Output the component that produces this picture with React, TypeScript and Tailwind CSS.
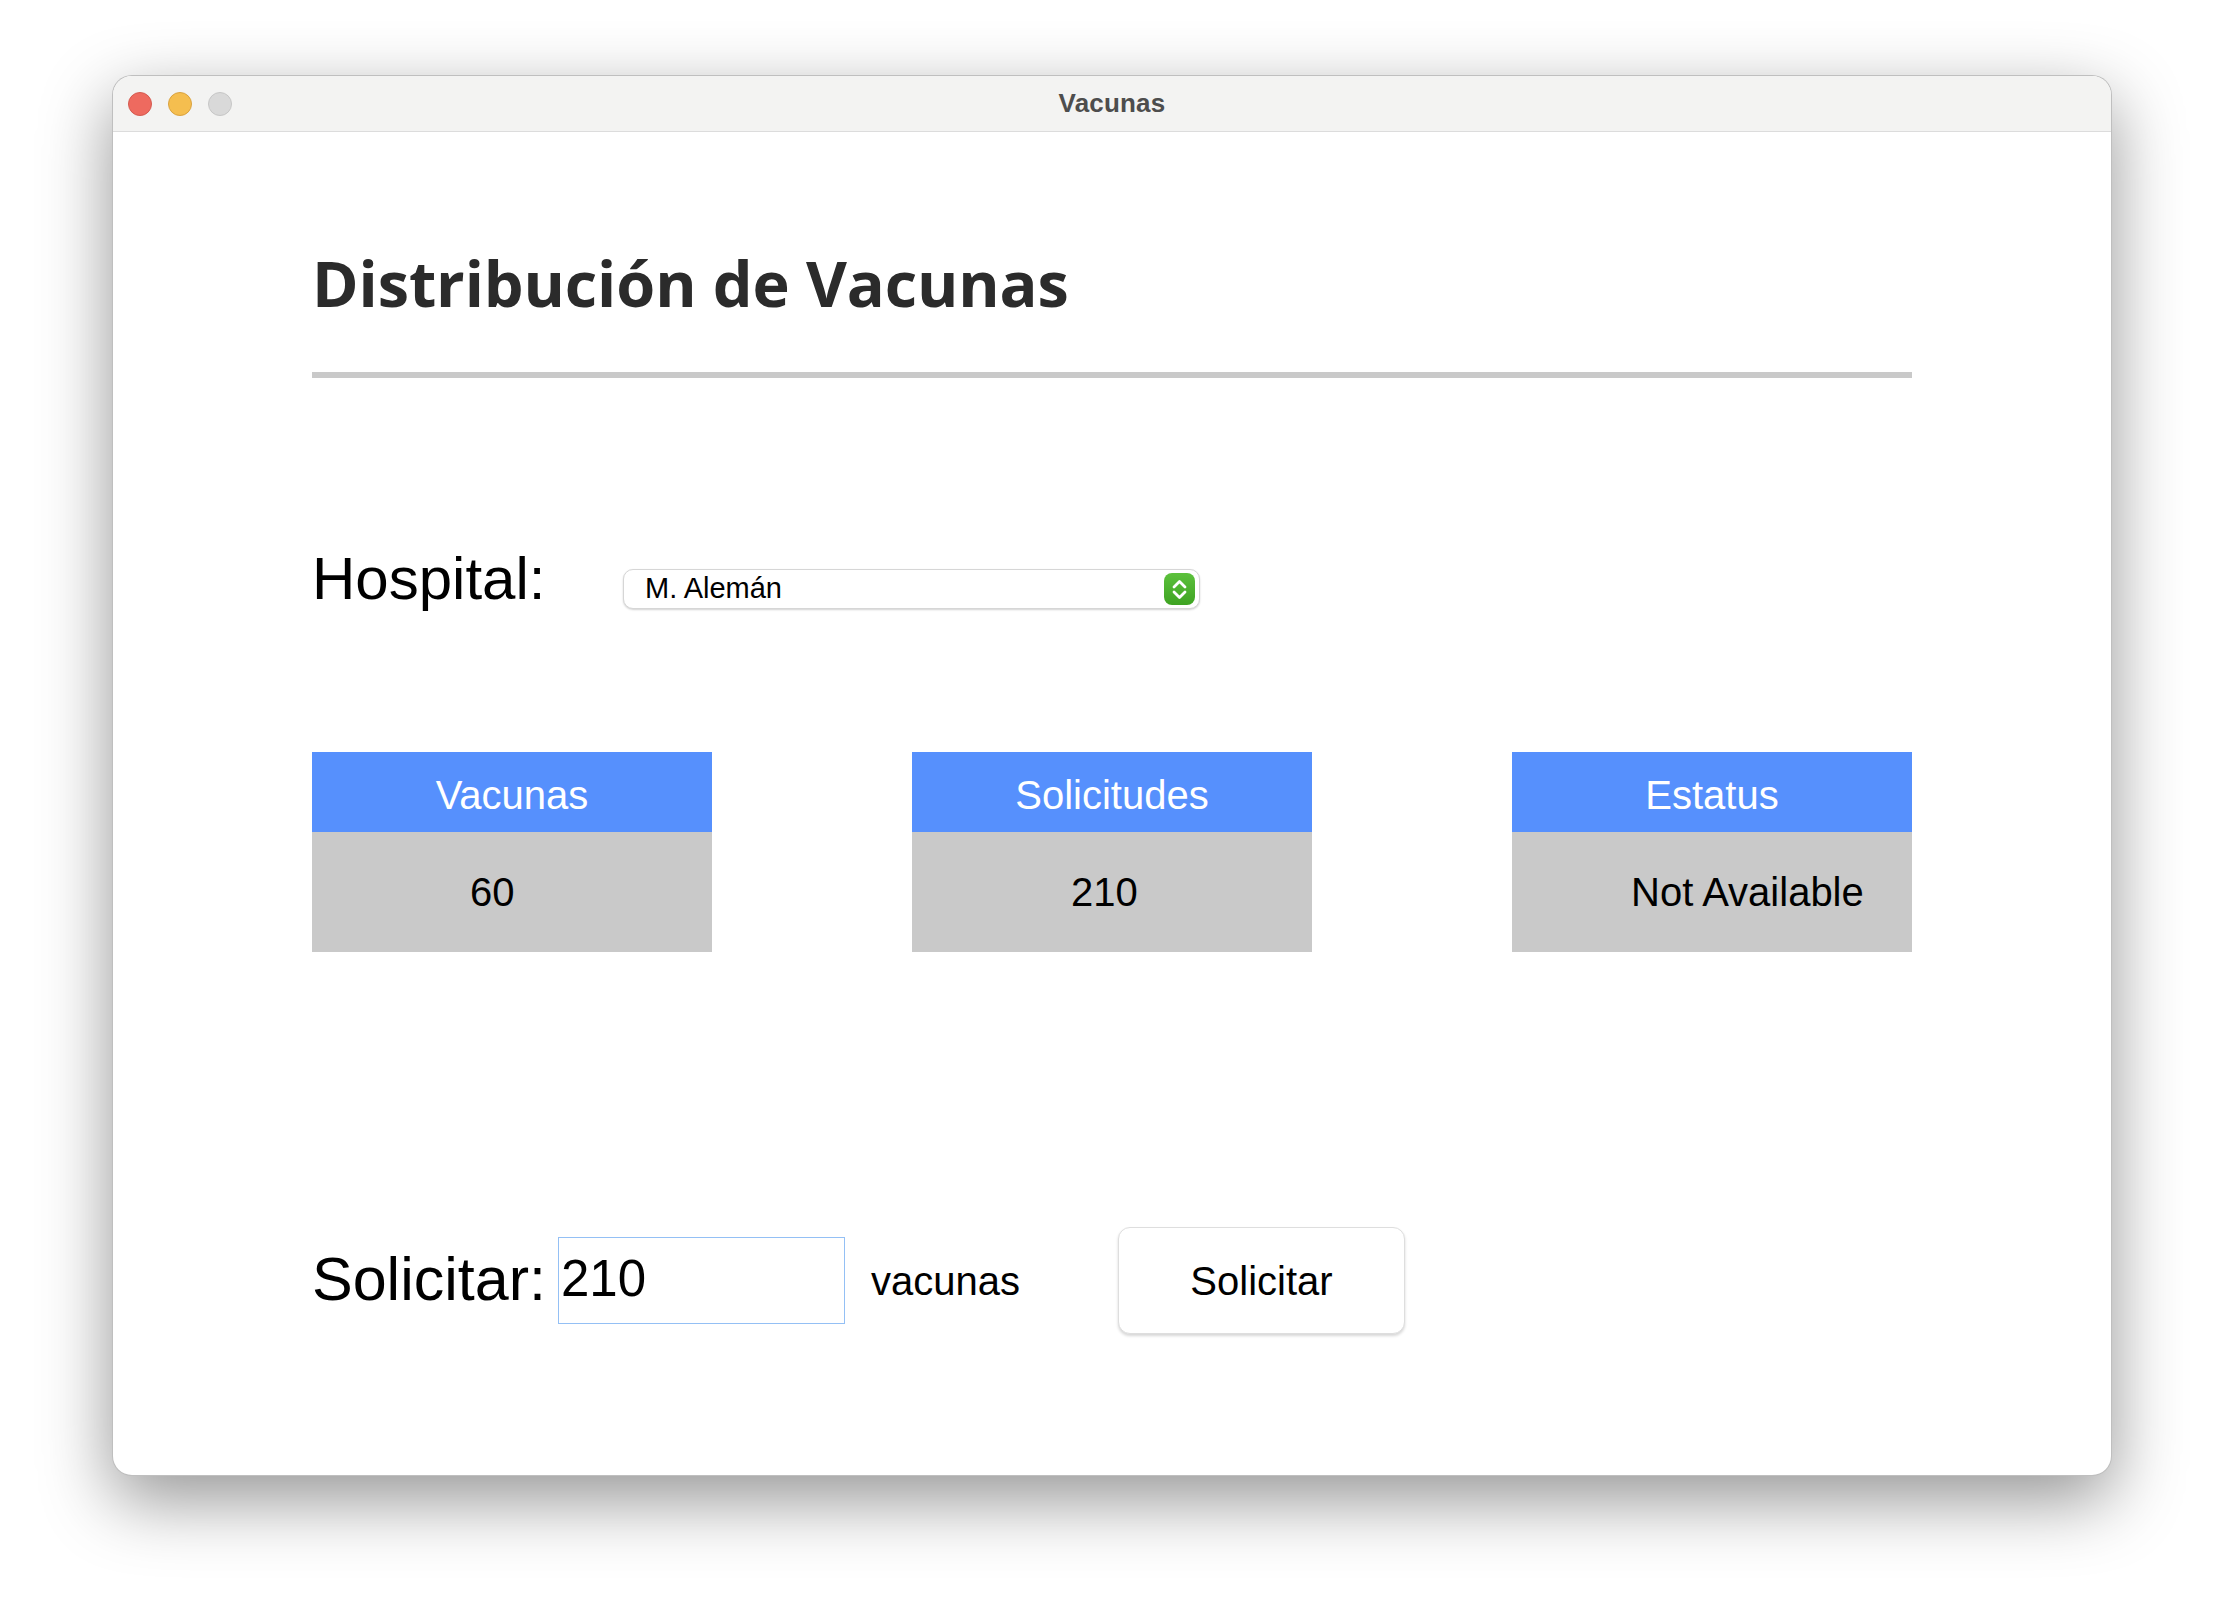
import React from "react";

interface Stat {
  title: string;
  value: string;
  pad: string;
}

const stats: Stat[] = [
  { title: "Vacunas", value: "60", pad: "pl-[158px]" },
  { title: "Solicitudes", value: "210", pad: "pl-[159px]" },
  { title: "Estatus", value: "Not Available", pad: "pl-[119px]" },
];

function Stepper() {
  return (
    <div className="w-[31px] h-[32px] rounded-[8px] bg-gradient-to-b from-[#5cc13c] to-[#3ea322] flex items-center justify-center">
      <svg width="31" height="32" viewBox="0 0 31 32" fill="none">
        <path d="M10 14 L15.5 8.5 L21 14" stroke="white" strokeWidth="2.8" strokeLinecap="round" strokeLinejoin="round" />
        <path d="M10 19 L15.5 24.5 L21 19" stroke="white" strokeWidth="2.8" strokeLinecap="round" strokeLinejoin="round" />
      </svg>
    </div>
  );
}

export default function App() {
  const sans = "font-['Liberation_Sans',Arial,sans-serif]";

  return (
    <div className="min-h-[1624px] w-full bg-white flex justify-center items-start pt-[75px]">
      <div className="w-[2000px] h-[1401px] rounded-[20px] bg-white border border-black/25 shadow-[0_24px_70px_rgba(0,0,0,0.42)] overflow-hidden flex flex-col">
        {/* Title bar */}
        <div className="h-[56px] shrink-0 bg-[#f3f3f2] border-b border-[#dcdcdc] grid grid-cols-[1fr_auto_1fr] items-center">
          <div className="flex items-center gap-[16px] pl-[15px]">
            <span className="w-[24px] h-[24px] rounded-full bg-[#ee6a5f] border border-[#d45a50]" />
            <span className="w-[24px] h-[24px] rounded-full bg-[#f5be4f] border border-[#d9a23f]" />
            <span className="w-[24px] h-[24px] rounded-full bg-[#d9d9d9] border border-[#c6c6c6]" />
          </div>
          <div className={`${sans} text-[26px] font-bold text-[#4d4d4d] tracking-[0.2px]`}>Vacunas</div>
          <div />
        </div>

        {/* Content */}
        <div className="flex flex-col px-[199px]">
          <h1 className="mt-[119px] font-['Open_Sans',sans-serif] font-bold text-[63px] leading-[64px] tracking-[-0.1px] text-[#2b2b2b]">
            Distribución de Vacunas
          </h1>
          <div className="mt-[57px] h-[6px] bg-[#c9c9c9]" />

          <div className="mt-[171px] flex items-start">
            <div className={`${sans} w-[311px] text-[60px] leading-[60px] text-black`}>Hospital:</div>
            <div className="mt-[20px] w-[577px] h-[40px] rounded-[10px] border border-[#d6d6d6] bg-white shadow-[0_1px_2px_rgba(0,0,0,0.18)] flex items-center justify-between pl-[21px] pr-[4px]">
              <span className={`${sans} text-[29px] text-black`}>M. Alemán</span>
              <Stepper />
            </div>
          </div>

          <div className="mt-[143px] flex justify-between">
            {stats.map(s => (
              <div key={s.title} className={`${sans} w-[400px] flex flex-col`}>
                <div className="h-[80px] bg-[#5690fd] flex items-center justify-center pt-[5px] text-[40px] text-white">
                  {s.title}
                </div>
                <div className={`h-[120px] bg-[#c9c9c9] flex items-center text-[40px] text-black ${s.pad}`}>
                  {s.value}
                </div>
              </div>
            ))}
          </div>

          <div className={`${sans} mt-[275px] flex items-center h-[107px]`}>
            <div className="w-[246px] text-[61px] leading-[60px] text-black mb-[4px]">Solicitar:</div>
            <input
              defaultValue="210"
              className="w-[287px] h-[87px] border border-[#94c0f5] bg-white pl-[2px] pb-[4px] text-[51px] text-black outline-none"
            />
            <div className="ml-[26px] w-[247px] text-[40px] text-black">vacunas</div>
            <button className="w-[287px] h-[107px] rounded-[12px] border border-[#dedede] bg-white shadow-[0_2px_3px_rgba(0,0,0,0.16)] text-[40px] text-black">
              Solicitar
            </button>
          </div>
        </div>
      </div>
    </div>
  );
}
